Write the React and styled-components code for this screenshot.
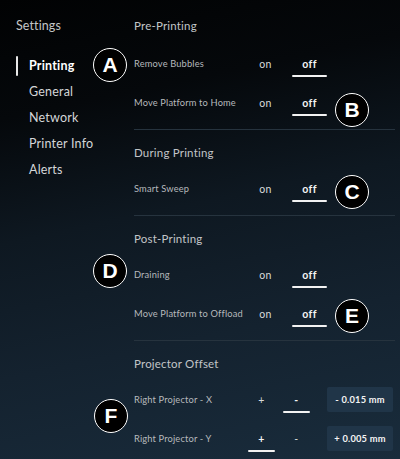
import React from "react";
import styled, { createGlobalStyle } from "styled-components";

const Global = createGlobalStyle`
  html, body { margin: 0; padding: 0; }
  body {
    width: 400px; height: 459px; overflow: hidden;
    font-family: Lato, "Open Sans", sans-serif;
    background: #000;
  }
  #root { height: 100%; }
`;

const Screen = styled.div`
  position: relative;
  width: 400px;
  height: 459px;
  display: flex;
  overflow: hidden;
  background: linear-gradient(168deg, #010203 0%, #05080b 22%, #0e1821 45%, #14222f 70%, #192c3c 100%);
  color: #fff;
`;

const Sidebar = styled.nav`
  width: 134px;
  flex: none;
  display: flex;
  flex-direction: column;
  padding: 18px 0 0 16px;
  box-sizing: border-box;
`;

const SideTitle = styled.div`
  font-size: 12.5px;
  color: #c4c6c8;
  line-height: 16px;
  margin-bottom: 19px;
  letter-spacing: 0.1px;
`;

const NavList = styled.div`
  display: flex;
  flex-direction: column;
`;

const NavItem = styled.div`
  position: relative;
  height: 26px;
  line-height: 26px;
  padding-left: 13px;
  font-size: 12.5px;
  letter-spacing: 0.2px;
  font-weight: ${(p) => (p.$active ? 700 : 400)};
  color: ${(p) => (p.$active ? "#ffffff" : "#d4d6d8")};
  &::before {
    content: "";
    display: ${(p) => (p.$active ? "block" : "none")};
    position: absolute;
    left: 0;
    top: 3px;
    width: 2px;
    height: 20px;
    background: #e8e8e8;
    border-radius: 1px;
  }
`;

const Main = styled.main`
  flex: 1;
  display: flex;
  flex-direction: column;
  padding: 3px 5px 0 0;
`;

const Section = styled.section`
  display: flex;
  flex-direction: column;
  padding: 15px 0 7px;
  border-bottom: ${(p) => (p.$last ? "none" : "1px solid #26333e")};
`;

const SectionTitle = styled.div`
  font-size: 11.5px;
  line-height: 16px;
  height: 16px;
  color: #c2c5c8;
  letter-spacing: 0.2px;
  margin-bottom: ${(p) => p.$gap ?? 8}px;
`;

const Row = styled.div`
  display: grid;
  grid-template-columns: ${(p) => p.$cols};
  height: 39px;
  align-items: center;
`;

const Label = styled.div`
  font-size: 9.3px;
  color: #b6b9bc;
  letter-spacing: 0.15px;
  white-space: nowrap;
`;

const Option = styled.div`
  position: relative;
  text-align: center;
  font-size: 10.5px;
  letter-spacing: 0.4px;
  font-weight: ${(p) => (p.$selected ? 700 : 400)};
  color: ${(p) => (p.$selected ? "#f4f4f4" : "#d8dadc")};
  line-height: 14px;
  &::after {
    content: "";
    display: ${(p) => (p.$selected ? "block" : "none")};
    position: absolute;
    left: 0;
    right: 0;
    top: 18px;
    height: 2px;
    border-radius: 1px;
    background: #f2f2f2;
  }
`;

const Value = styled.div`
  height: 25px;
  border-radius: 2px;
  background: #203548;
  display: flex;
  align-items: center;
  justify-content: center;
  font-size: 9.3px;
  font-weight: 700;
  letter-spacing: 0.2px;
  color: #f4f4f4;
`;

const Badge = styled.div`
  position: absolute;
  left: ${(p) => p.$x - 17}px;
  top: ${(p) => p.$y - 17}px;
  width: 34px;
  height: 34px;
  box-sizing: border-box;
  border-radius: 50%;
  border: 1.5px solid #fff;
  background: #000;
  display: flex;
  align-items: center;
  justify-content: center;
  font-family: "Liberation Sans", Arial, sans-serif;
  font-weight: 700;
  font-size: 21px;
  color: #fff;
`;

const TOGGLE_COLS = "114px 35px 9px 35px";
const OFFSET_COLS = "114px 27px 8px 27px 17px 66px";

const ToggleRow = ({ label, value }) => (
  <Row $cols={TOGGLE_COLS}>
    <Label>{label}</Label>
    <Option $selected={value === "on"}>on</Option>
    <span />
    <Option $selected={value === "off"}>off</Option>
  </Row>
);

const OffsetRow = ({ label, sign, value }) => (
  <Row $cols={OFFSET_COLS}>
    <Label>{label}</Label>
    <Option $selected={sign === "+"}>+</Option>
    <span />
    <Option $selected={sign === "-"}>-</Option>
    <span />
    <Value>{value}</Value>
  </Row>
);

const sections = [
  {
    title: "Pre-Printing",
    gap: 10,
    rows: [
      { label: "Remove Bubbles", value: "off" },
      { label: "Move Platform to Home", value: "off" },
    ],
  },
  { title: "During Printing", rows: [{ label: "Smart Sweep", value: "off" }] },
  {
    title: "Post-Printing",
    rows: [
      { label: "Draining", value: "off" },
      { label: "Move Platform to Offload", value: "off" },
    ],
  },
];

const badges = [
  ["A", 110, 65],
  ["B", 352, 110],
  ["C", 352, 192],
  ["D", 110, 271],
  ["E", 352, 316],
  ["F", 111, 416],
];

export default function App() {
  return (
    <>
      <Global />
      <Screen>
        <Sidebar>
          <SideTitle>Settings</SideTitle>
          <NavList>
            <NavItem $active>Printing</NavItem>
            <NavItem>General</NavItem>
            <NavItem>Network</NavItem>
            <NavItem>Printer Info</NavItem>
            <NavItem>Alerts</NavItem>
          </NavList>
        </Sidebar>
        <Main>
          {sections.map((s) => (
            <Section key={s.title}>
              <SectionTitle $gap={s.gap}>{s.title}</SectionTitle>
              {s.rows.map((r) => (
                <ToggleRow key={r.label} label={r.label} value={r.value} />
              ))}
            </Section>
          ))}
          <Section $last>
            <SectionTitle>Projector Offset</SectionTitle>
            <OffsetRow label="Right Projector - X" sign="-" value="- 0.015 mm" />
            <OffsetRow label="Right Projector - Y" sign="+" value="+ 0.005 mm" />
          </Section>
        </Main>
        {badges.map(([l, x, y]) => (
          <Badge key={l} $x={x} $y={y}>
            {l}
          </Badge>
        ))}
      </Screen>
    </>
  );
}
